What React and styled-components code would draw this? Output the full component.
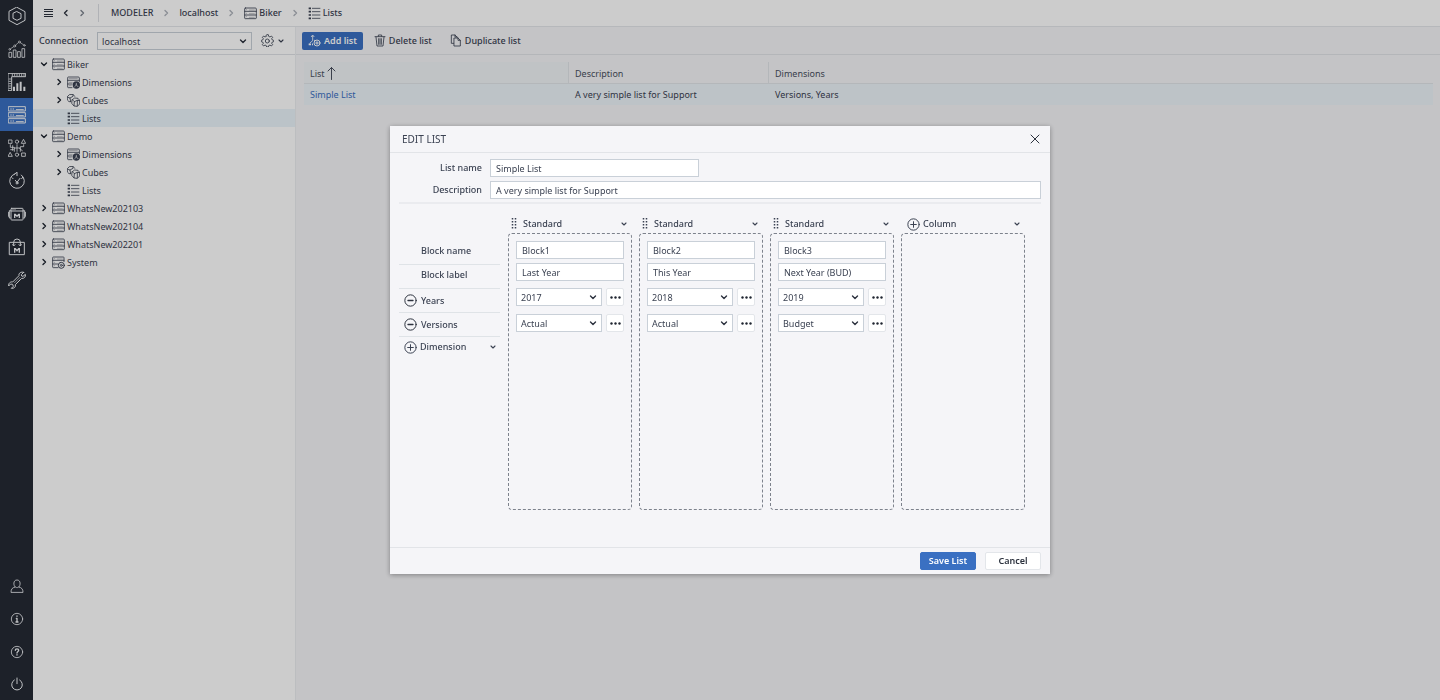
import React, { useState } from 'react';
import styled, { createGlobalStyle, css } from 'styled-components';

const GlobalStyle = createGlobalStyle`
  * {
    box-sizing: border-box;
  }
  body {
    margin: 0;
    background: #f5f5f8;
    color: #3b4252;
    font-family: 'Noto Sans', 'Open Sans', sans-serif;
    font-size: 9px;
    line-height: 12px;
  }
  button, input, select {
    font: inherit;
    color: inherit;
    margin: 0;
  }
  button {
    padding: 0;
    border: 0;
    background: none;
    cursor: pointer;
  }
  a {
    color: inherit;
    text-decoration: none;
  }
  svg {
    display: block;
    flex: none;
  }
`;

/* ---------- icons ---------- */

const Svg = styled.svg`
  fill: none;
  stroke: currentColor;
  stroke-width: ${(p) => p.$stroke || 3};
  stroke-linecap: round;
  stroke-linejoin: round;
`;

const RailSvg = ({ children }) => (
  <Svg width="18" height="18" viewBox="0 0 54 54" aria-hidden="true">{children}</Svg>
);

const LogoIcon = () => (
  <RailSvg>
    <path d="M27 1 51 14V40L27 53 3 40V14Z" />
    <path d="M27 14 39 20V34L27 40 15 34V20Z" />
  </RailSvg>
);

const ChartIcon = () => (
  <RailSvg>
    <path d="M4 37h7v15H4ZM17 30h7v22h-7ZM30 35h7v17h-7ZM43 26h7v26h-7Z" strokeWidth="2.5" />
    <circle cx="5" cy="28" r="2.5" strokeWidth="2" />
    <circle cx="20" cy="18" r="3" strokeWidth="2" />
    <circle cx="34" cy="6" r="3" strokeWidth="2" />
    <circle cx="49" cy="16" r="2.5" strokeWidth="2" />
    <path d="m8 26 9-6M22 16l9-8M37 8l9 6" strokeWidth="2" />
  </RailSvg>
);

const ReportIcon = () => (
  <RailSvg>
    <path d="M1 1h52v10H11v42H1Z" />
    <path d="M13 3v5M20 3v5M27 3v5M34 3v5M41 3v5M48 3v5M3 18h5M3 25h5M3 32h5M3 39h5M3 46h5" strokeWidth="2.5" />
    <path d="M18 41v13M28 31v23M38 26v28M49 41v13" strokeWidth="6" strokeLinecap="butt" />
  </RailSvg>
);

const ServerIcon = () => (
  <RailSvg>
    <path d="M2 2h50v13H2ZM2 20h50v13H2ZM2 38h50v13H2Z" />
    <path d="M8 9h2M15 9h2M8 27h2M15 27h2M8 45h2M15 45h2M25 11h21M25 29h21M25 47h21" />
  </RailSvg>
);

const FlowIcon = () => (
  <RailSvg>
    <path d="M2 3h10v10H2ZM42 42h10v10H42ZM47 2l6 11H41ZM7 41l6 11H1Z" strokeWidth="2.5" />
    <circle cx="27" cy="8" r="5" strokeWidth="2.5" />
    <circle cx="27" cy="47" r="5" strokeWidth="2.5" />
    <path d="M7 17v8h12v12M14 20v14M27 17v20M19 27h16M47 17v6H37v14M35 29l8 6M8 32h8" strokeWidth="2.5" />
  </RailSvg>
);

const GaugeIcon = () => (
  <RailSvg>
    <path d="M20 6a22 22 0 1 0 20 3M27 2v9M20 6l7-5M22 25l5 6 9-12M12 17l3 3M44 16l-3 4" />
    <circle cx="27" cy="33" r="3" />
  </RailSvg>
);

const MarketIcon = () => (
  <RailSvg>
    <rect x="9" y="10" width="36" height="35" rx="2" />
    <path d="M9 18h36M7 17H4v22h3M47 17h3v22h-3M1 22v12M53 22v12" />
    <path d="M14 14h2M20 14h2" strokeWidth="2" />
    <path d="M20 39V28h2l5 6 5-6h2v11" strokeWidth="4" strokeLinecap="butt" strokeLinejoin="miter" />
  </RailSvg>
);

const BagIcon = () => (
  <RailSvg>
    <path d="M5 13h44v37H5ZM17 22v-9a10 10 0 0 1 20 0v9M14 20l3 4 4-4M33 20l4 4 3-4" />
    <path d="M20 44V32h2l5 6 5-6h2v12" strokeWidth="4" strokeLinecap="butt" strokeLinejoin="miter" />
  </RailSvg>
);

const WrenchIcon = () => (
  <RailSvg>
    <path d="M47 4 40 11l1 4 4 1 7-6c2 7-4 14-11 12L22 41c2 7-4 12-12 11l6-6-2-6-6-1-6 6c-1-8 5-14 12-12L33 14C31 7 39 1 47 4Z" />
    <path d="m20 35 16-16" strokeWidth="2" />
  </RailSvg>
);

const UserIcon = () => (
  <RailSvg>
    <path d="M9 45c0-9 4-13 13-15-6-4-7-21 5-21s11 17 5 21c9 2 13 6 13 15Z" strokeWidth="2.5" />
    <path d="M22 30c3 3 7 3 10 0" strokeWidth="2" />
  </RailSvg>
);

const InfoIcon = () => (
  <RailSvg>
    <circle cx="27" cy="27" r="17" strokeWidth="2.5" />
    <path d="M27 18v1M25 25h2v11M24 36h6" strokeWidth="4" />
  </RailSvg>
);

const HelpIcon = () => (
  <RailSvg>
    <circle cx="27" cy="27" r="17" strokeWidth="2.5" />
    <path d="M22 22c0-6 10-6 10 0 0 4-5 3-5 8M27 35v1" strokeWidth="4" />
  </RailSvg>
);

const PowerIcon = () => (
  <RailSvg>
    <path d="M19 15a16 16 0 1 0 16 0M27 9v17" />
  </RailSvg>
);

const DatabaseIcon = ({ gear }) => (
  <Svg width="13" height="13" viewBox="0 0 39 39" $stroke={2.5} aria-hidden="true">
    <path d={gear ? 'M18 35H4q-2 0-2-2V5q0-2 2-2h30q2 0 2 2v12M2 13h34M2 24h15' : 'M4 3h30q3 0 3 3v27q0 2-3 2H4q-2 0-2-2V6q0-3 2-3ZM2 13h35M2 24h35'} />
    <path d={gear ? 'M7 8h1M7 19h1M7 29h1M16 9h15' : 'M7 8h1M7 19h1M7 29h1M16 9h15M16 20h15M16 31h15'} strokeWidth="2" opacity="0.5" />
    {gear && (
      <>
        <circle cx="28" cy="28" r="9" strokeWidth="3" />
        <circle cx="28" cy="28" r="3" />
      </>
    )}
  </Svg>
);

const DimensionIcon = () => (
  <Svg width="13" height="13" viewBox="0 0 39 39" aria-hidden="true">
    <path d="M15 35H4q-2 0-2-2V5q0-2 2-2h30q3 0 3 3v11M2 13h35M2 24h13" strokeWidth="2.5" />
    <path d="M7 8h24M7 19h9M7 29h6" strokeWidth="2" opacity="0.6" />
    <circle cx="28" cy="27" r="11" fill="currentColor" stroke="none" />
    <path d="M28 22v5l-5 5M28 27l5 5" stroke="#fff" strokeWidth="2" />
  </Svg>
);

const CubesIcon = () => (
  <Svg width="13" height="13" viewBox="0 0 39 39" aria-hidden="true">
    <path d="M11 23 6 23 1 18V8l6-6 11-1 5 6M1 9l8 3 2 11M9 12l9-5V2" strokeWidth="2.5" />
    <path d="m16 17 7-5 10 1 5 6v11l-7 7-10-1-6-7ZM21 35l1-12-6-6M22 23l9-4 7 1M31 19v17" strokeWidth="2.5" />
  </Svg>
);

const ListIcon = () => (
  <Svg width="13" height="13" viewBox="0 0 39 39" aria-hidden="true">
    <path d="M2 4h7M2 14h7M2 24h7M2 34h7" strokeWidth="5" strokeLinecap="butt" />
    <path d="M12 4h25M12 14h25M12 24h25M12 34h25" strokeWidth="3" strokeLinecap="butt" opacity="0.8" />
  </Svg>
);

const chevronPaths = {
  down: 'M1.5 3 4 5.5 6.5 3',
  right: 'M3 1.5 5.5 4 3 6.5',
  left: 'M5 1.5 2.5 4 5 6.5',
};

const Chevron = ({ dir = 'down', stroke = 1.4 }) => (
  <Svg width="8" height="8" viewBox="0 0 8 8" $stroke={stroke} aria-hidden="true">
    <path d={chevronPaths[dir]} />
  </Svg>
);

const SmallChevron = () => (
  <Svg width="6" height="6" viewBox="0 0 6 6" $stroke={1.1} aria-hidden="true">
    <path d="M1 2 3 4 5 2" />
  </Svg>
);

const MenuIcon = () => (
  <Svg width="10" height="10" viewBox="0 0 10 10" $stroke={1} aria-hidden="true">
    <path d="M0 1.5h9M0 3.5h9M0 6.5h9M0 8.5h9" strokeLinecap="butt" />
  </Svg>
);

const GearIcon = () => (
  <Svg width="13" height="13" viewBox="0 0 39 39" $stroke={2.5} aria-hidden="true">
    <path d="m16 3 1-1h5l1 5 4 2 4-3 4 4-3 4 2 4 4 1v4l-4 1-2 4 3 4-4 4-4-3-4 2-1 4h-5l-1-4-4-2-4 3-4-4 3-4-2-4-4-1v-4l4-1 2-4-3-4 4-4 4 3 4-2Z" />
    <circle cx="19" cy="21" r="6" />
  </Svg>
);

const AddListIcon = () => (
  <Svg width="13" height="13" viewBox="0 0 39 39" $stroke={2.5} aria-hidden="true">
    <path d="M14 6v12M10 8l4-5 4 5M14 20 6 27M19 19l4 1" />
    <path d="M2 31h7M12 31h3" strokeWidth="5" strokeLinecap="butt" />
    <circle cx="27" cy="27" r="9" strokeWidth="3" />
    <path d="M27 23v8M23 27h8" strokeWidth="3" />
  </Svg>
);

const TrashIcon = () => (
  <Svg width="12" height="13" viewBox="0 0 36 39" $stroke={2.5} aria-hidden="true">
    <path d="M3 8h30M13 7V3h10v4M6 9l3 27h18l3-27M14 14v17M18 14v17M22 14v17" />
  </Svg>
);

const CopyIcon = () => (
  <Svg width="12" height="13" viewBox="0 0 36 39" $stroke={2.5} aria-hidden="true">
    <path d="M11 28H4V3h11l7 7M15 3v6h6" />
    <path d="M13 12h11l7 7v17H13ZM24 12v7h7" />
  </Svg>
);

const SortIcon = () => (
  <Svg width="9" height="13" viewBox="0 0 9 13" $stroke={1} aria-hidden="true">
    <path d="M4.5 12.5v-12M1 4 4.5.5 8 4" />
  </Svg>
);

const CloseIcon = () => (
  <Svg width="10" height="10" viewBox="0 0 10 10" $stroke={1} aria-hidden="true">
    <path d="m1 1 8 8M9 1 1 9" />
  </Svg>
);

const CircleIcon = ({ plus }) => (
  <Svg width="13" height="13" viewBox="0 0 39 39" aria-hidden="true">
    <circle cx="19.5" cy="19.5" r="17" strokeWidth="3" />
    {plus ? <path d="M19.5 11v17M11 19.5h17" /> : <path d="M12 19.5h15" strokeWidth="4" />}
  </Svg>
);

const GripIcon = () => (
  <Svg width="6" height="12" viewBox="0 0 6 12" aria-hidden="true">
    <path d="M1.5 0v12M4.5 0v12" strokeLinecap="butt" strokeDasharray="1.5 1.5" strokeWidth="1.5" />
  </Svg>
);

const DotsIcon = () => (
  <Svg width="11" height="3" viewBox="0 0 11 3" aria-hidden="true">
    <g fill="currentColor" stroke="none">
      <circle cx="1.5" cy="1.5" r="1.2" />
      <circle cx="5.5" cy="1.5" r="1.2" />
      <circle cx="9.5" cy="1.5" r="1.2" />
    </g>
  </Svg>
);

/* ---------- shell ---------- */

const Page = styled.div`
  display: flex;
  min-height: 100vh;
`;

const Rail = styled.nav`
  display: flex;
  flex-direction: column;
  flex: none;
  width: 33px;
  background: #252a34;
`;

const RailItem = styled.a`
  display: flex;
  align-items: center;
  justify-content: center;
  height: 33px;
  color: #f0f2f5;
  &:first-child, &:last-child {
    height: 32px;
  }
  ${(p) => p.$active && css`
    background: #3a70c2;
  `}
`;

const RailSpacer = styled.div`
  flex: 1;
`;

const Content = styled.div`
  display: flex;
  flex-direction: column;
  flex: 1;
  min-width: 0;
`;

const TopBar = styled.header`
  display: flex;
  align-items: center;
  height: 27px;
  padding-left: 11px;
  background: #fff;
  border-bottom: 1px solid #e4e6ea;
  font-weight: 500;
`;

const HistoryButtons = styled.div`
  display: flex;
  align-items: center;
  gap: 8px;
  height: 18px;
  padding-right: 12px;
  border-right: 1px solid #dcdfe4;
`;

const IconButton = styled.button`
  display: flex;
  align-items: center;
  color: ${(p) => (p.$dim ? '#7d838e' : '#2c323e')};
`;

const Breadcrumb = styled.ol`
  display: flex;
  align-items: center;
  list-style: none;
  margin: 0;
  padding: 0 0 0 12px;
`;

const Crumb = styled.li`
  display: flex;
  align-items: center;
  a {
    display: flex;
    align-items: center;
    gap: 2px;
  }
`;

const CrumbArrow = styled.span`
  margin: 0 9px;
  color: #aeb3bb;
`;

const Columns = styled.div`
  display: flex;
  flex: 1;
`;

const Side = styled.aside`
  flex: none;
  width: 263px;
  background: #fff;
  border-right: 1px solid #eceef1;
`;

const ConnectionBar = styled.div`
  display: flex;
  align-items: center;
  height: 28px;
  padding: 0 11px 0 6px;
  gap: 9px;
  border-bottom: 1px solid #dfe2e6;
  label {
    font-weight: 500;
  }
`;

const GearButton = styled.button`
  display: flex;
  align-items: center;
  gap: 4px;
`;

const SelectBox = styled.span`
  display: grid;
  flex: 1;
  min-width: 0;
  align-items: center;
  background: #fff;
  > select, > svg {
    grid-area: 1 / 1;
  }
  > svg {
    justify-self: end;
    margin-right: 5px;
    color: #2c323e;
    pointer-events: none;
  }
`;

const fieldStyle = css`
  width: 100%;
  height: 18px;
  padding: 1px 4px 0 5px;
  border: 1px solid #c9d0d8;
  border-radius: 0;
  background: #fff;
  line-height: 15px;
  outline: none;
  &:focus {
    border-color: #3a70c2;
  }
`;

const SelectField = styled.select`
  ${fieldStyle}
  padding-left: 4px;
  appearance: none;
`;

const Input = styled.input`
  ${fieldStyle}
`;

const Tree = styled.ul`
  list-style: none;
  margin: 0;
  padding: 0;
`;

const TreeRow = styled.a`
  display: flex;
  align-items: center;
  height: 18px;
  padding-left: ${(p) => 7 + p.$level * 15}px;
  background: ${(p) => (p.$selected ? '#eaf4fa' : 'transparent')};
  > span {
    margin-left: 2px;
    padding-top: 1px;
  }
`;

const Twisty = styled.i`
  width: 8px;
  height: 8px;
  margin-right: 4px;
  color: #1f2530;
`;

/* ---------- list view ---------- */

const Main = styled.main`
  flex: 1;
  min-width: 0;
  background: #f5f5f8;
`;

const Toolbar = styled.div`
  display: flex;
  align-items: center;
  gap: 11px;
  height: 28px;
  padding: 0 6px;
  border-bottom: 1px solid #e2e4e8;
`;

const ToolButton = styled.button`
  display: flex;
  align-items: center;
  gap: 3px;
  height: 18px;
  padding-right: 7px;
  font-weight: 500;
  ${(p) => p.$primary && css`
    padding: 0 6px;
    border-radius: 2px;
    background: #3a70c2;
    color: #fff;
    font-weight: 600;
  `}
`;

const TableWrap = styled.div`
  padding: 7px 7px 0 8px;
`;

const Table = styled.table`
  width: 100%;
  table-layout: fixed;
  border-collapse: separate;
  border-spacing: 0;
  text-align: left;
  th, td {
    height: 21px;
    padding: 0 0 0 6px;
  }
  th {
    height: 22px;
    padding-top: 2px;
    border-bottom: 1px solid #e2e5e9;
    font-weight: 400;
    color: #4a5160;
  }
  th + th {
    border-left: 1px solid #e2e5e9;
  }
  th:first-child {
    background: #f0f4f7;
  }
  td {
    background: #edf4f9;
  }
  td:first-child {
    color: #3a70c2;
  }
  td + td {
    padding-left: 7px;
  }
`;

const SortHead = styled.span`
  display: flex;
  align-items: center;
  gap: 2px;
`;

/* ---------- dialog ---------- */

const Overlay = styled.div`
  position: fixed;
  inset: 0;
  display: flex;
  align-items: center;
  justify-content: center;
  background: rgba(0, 0, 0, 0.2);
`;

const Dialog = styled.form`
  display: flex;
  flex-direction: column;
  width: 660px;
  max-width: 100%;
  background: #f5f5f8;
  box-shadow: 0 1px 5px rgba(0, 0, 0, 0.35);
`;

const DialogHeader = styled.div`
  display: flex;
  align-items: center;
  justify-content: space-between;
  height: 27px;
  padding: 0 10px 0 12px;
  border-bottom: 1px solid #e2e4e8;
  h2 {
    margin: 0;
    font-size: 10px;
    font-weight: 400;
  }
`;

const DialogBody = styled.div`
  padding: 6px 9px 37px;
`;

const Fields = styled.div`
  display: grid;
  grid-template-columns: 83px 1fr;
  column-gap: 8px;
  row-gap: 4px;
  align-items: center;
  padding-bottom: 3px;
  border-bottom: 2px solid #eaebef;
  label {
    font-weight: 500;
    text-align: right;
  }
`;

const NameInput = styled(Input)`
  max-width: 209px;
`;

const Blocks = styled.div`
  display: flex;
  gap: 7px;
  padding-top: 11px;
`;

const RowLabels = styled.div`
  width: 102px;
  padding-top: 26px;
  font-weight: 500;
`;

const RowLabel = styled.div`
  display: flex;
  align-items: center;
  gap: 4px;
  height: ${(p) => (p.$last ? 20 : 24)}px;
  margin-right: 1px;
  padding: ${(p) => (p.$plain ? '0 4px 3px 22px' : '0 4px 0 5px')};
  border-bottom: ${(p) => (p.$last ? 0 : 1)}px solid #dfe3e7;
`;

const AddButton = styled.button`
  display: flex;
  flex: 1;
  align-items: center;
  gap: 3px;
  font-weight: 500;
  > svg:last-child {
    margin-left: auto;
  }
`;

const Block = styled.section`
  display: flex;
  flex-direction: column;
  width: 124px;
`;

const BlockHead = styled.div`
  display: flex;
  align-items: center;
  gap: 6px;
  height: 18px;
  padding: 0 5px 0 ${(p) => (p.$add ? 6 : 3)}px;
`;

const BlockBody = styled.div`
  display: flex;
  flex-direction: column;
  gap: 4px;
  height: 277px;
  padding: 7px;
  border: 1px dashed #7d828c;
  border-radius: 4px;
`;

const PickRow = styled.div`
  display: flex;
  gap: 4px;
  & + & {
    margin-top: 4px;
  }
  input + & {
    margin-top: 3px;
  }
`;

const MoreButton = styled.button`
  display: flex;
  align-items: center;
  justify-content: center;
  width: 18px;
  height: 18px;
  border: 1px solid #e3e6ea;
  border-radius: 2px;
  background: #fff;
  color: #1f2530;
`;

const DialogFooter = styled.div`
  display: flex;
  justify-content: flex-end;
  gap: 9px;
  padding: 4px 9px;
  border-top: 1px solid #e2e4e8;
`;

const DialogButton = styled.button`
  width: 56px;
  height: 18px;
  border: 1px solid ${(p) => (p.$primary ? '#3a70c2' : '#e3e6ea')};
  border-radius: 2px;
  background: ${(p) => (p.$primary ? '#3a70c2' : '#fff')};
  color: ${(p) => (p.$primary ? '#fff' : '#2c323e')};
  font-weight: 600;
`;

const railTop = [
  { label: 'Home', Icon: LogoIcon },
  { label: 'Dashboards', Icon: ChartIcon },
  { label: 'Reports', Icon: ReportIcon },
  { label: 'Modeler', Icon: ServerIcon, active: true },
  { label: 'Integrator', Icon: FlowIcon },
  { label: 'Scheduler', Icon: GaugeIcon },
  { label: 'My models', Icon: MarketIcon },
  { label: 'Marketplace', Icon: BagIcon },
  { label: 'Administration', Icon: WrenchIcon },
];

const railBottom = [
  { label: 'User', Icon: UserIcon },
  { label: 'Info', Icon: InfoIcon },
  { label: 'Help', Icon: HelpIcon },
  { label: 'Log out', Icon: PowerIcon },
];

const folders = [
  { name: 'Dimensions', level: 1, Icon: DimensionIcon, arrow: 'right' },
  { name: 'Cubes', level: 1, Icon: CubesIcon, arrow: 'right' },
  { name: 'Lists', level: 1, Icon: ListIcon },
];

const tree = [
  { name: 'Biker', level: 0, Icon: DatabaseIcon, arrow: 'down' },
  ...folders.map((f) => ({ ...f, selected: f.name === 'Lists' })),
  { name: 'Demo', level: 0, Icon: DatabaseIcon, arrow: 'down' },
  ...folders,
  { name: 'WhatsNew202103', level: 0, Icon: DatabaseIcon, arrow: 'right' },
  { name: 'WhatsNew202104', level: 0, Icon: DatabaseIcon, arrow: 'right' },
  { name: 'WhatsNew202201', level: 0, Icon: DatabaseIcon, arrow: 'right' },
  { name: 'System', level: 0, Icon: DatabaseIcon, arrow: 'right', gear: true },
];

const initialBlocks = [
  { name: 'Block1', label: 'Last Year', year: '2017', version: 'Actual' },
  { name: 'Block2', label: 'This Year', year: '2018', version: 'Actual' },
  { name: 'Block3', label: 'Next Year (BUD)', year: '2019', version: 'Budget' },
];

const Select = ({ options, ...rest }) => (
  <SelectBox>
    <SelectField {...rest}>
      {options.map((o) => <option key={o}>{o}</option>)}
    </SelectField>
    <Chevron />
  </SelectBox>
);

const RailLinks = ({ items }) => items.map(({ label, Icon, active }) => (
  <RailItem key={label} href="#" aria-label={label} $active={active}>
    <Icon />
  </RailItem>
));

const SidePanel = () => (
  <Side>
    <ConnectionBar>
      <label htmlFor="connection">Connection</label>
      <Select id="connection" options={['localhost']} />
      <GearButton type="button" aria-label="Connection settings">
        <GearIcon />
        <SmallChevron />
      </GearButton>
    </ConnectionBar>
    <Tree>
      {tree.map(({ name, level, Icon, arrow, selected, gear }, i) => (
        <li key={i}>
          <TreeRow href="#" $level={level} $selected={selected}>
            <Twisty>{arrow && <Chevron dir={arrow} />}</Twisty>
            {gear ? <Icon gear /> : <Icon />}
            <span>{name}</span>
          </TreeRow>
        </li>
      ))}
    </Tree>
  </Side>
);

const BlockColumn = ({ block, onChange }) => {
  const set = (key) => (e) => onChange({ ...block, [key]: e.target.value });
  return (
    <Block>
      <BlockHead>
        <GripIcon />
        <AddButton type="button">
          Standard
          <SmallChevron />
        </AddButton>
      </BlockHead>
      <BlockBody>
        <Input aria-label="Block name" value={block.name} onChange={set('name')} />
        <Input aria-label="Block label" value={block.label} onChange={set('label')} />
        <PickRow>
          <Select aria-label="Years" options={['2017', '2018', '2019']} value={block.year} onChange={set('year')} />
          <MoreButton type="button" aria-label="More years"><DotsIcon /></MoreButton>
        </PickRow>
        <PickRow>
          <Select aria-label="Versions" options={['Actual', 'Budget']} value={block.version} onChange={set('version')} />
          <MoreButton type="button" aria-label="More versions"><DotsIcon /></MoreButton>
        </PickRow>
      </BlockBody>
    </Block>
  );
};

const EditListDialog = () => {
  const [blocks, setBlocks] = useState(initialBlocks);
  const updateBlock = (index, next) => {
    setBlocks(blocks.map((b, i) => (i === index ? next : b)));
  };
  return (
    <Overlay>
      <Dialog role="dialog" aria-labelledby="dialog-title" onSubmit={(e) => e.preventDefault()}>
        <DialogHeader>
          <h2 id="dialog-title">EDIT LIST</h2>
          <IconButton type="button" aria-label="Close"><CloseIcon /></IconButton>
        </DialogHeader>
        <DialogBody>
          <Fields>
            <label htmlFor="list-name">List name</label>
            <NameInput id="list-name" defaultValue="Simple List" />
            <label htmlFor="list-description">Description</label>
            <Input id="list-description" defaultValue="A very simple list for Support" />
          </Fields>
          <Blocks>
            <RowLabels>
              <RowLabel $plain>Block name</RowLabel>
              <RowLabel $plain>Block label</RowLabel>
              {['Years', 'Versions'].map((name) => (
                <RowLabel key={name}>
                  <IconButton type="button" aria-label={`Remove ${name}`}><CircleIcon /></IconButton>
                  {name}
                </RowLabel>
              ))}
              <RowLabel $last>
                <AddButton type="button">
                  <CircleIcon plus />
                  Dimension
                  <SmallChevron />
                </AddButton>
              </RowLabel>
            </RowLabels>
            {blocks.map((block, i) => (
              <BlockColumn key={i} block={block} onChange={(next) => updateBlock(i, next)} />
            ))}
            <Block>
              <BlockHead $add>
                <AddButton type="button">
                  <CircleIcon plus />
                  Column
                  <SmallChevron />
                </AddButton>
              </BlockHead>
              <BlockBody />
            </Block>
          </Blocks>
        </DialogBody>
        <DialogFooter>
          <DialogButton type="submit" $primary>Save List</DialogButton>
          <DialogButton type="button">Cancel</DialogButton>
        </DialogFooter>
      </Dialog>
    </Overlay>
  );
};

const App = () => (
  <>
    <GlobalStyle />
    <Page>
      <Rail>
        <RailLinks items={railTop} />
        <RailSpacer />
        <RailLinks items={railBottom} />
      </Rail>
      <Content>
        <TopBar>
          <HistoryButtons>
            <IconButton type="button" aria-label="Menu"><MenuIcon /></IconButton>
            <IconButton type="button" aria-label="Back"><Chevron dir="left" /></IconButton>
            <IconButton type="button" aria-label="Forward" $dim><Chevron dir="right" /></IconButton>
          </HistoryButtons>
          <Breadcrumb>
            <Crumb><a href="#">MODELER</a><CrumbArrow><Chevron dir="right" /></CrumbArrow></Crumb>
            <Crumb><a href="#">localhost</a><CrumbArrow><Chevron dir="right" /></CrumbArrow></Crumb>
            <Crumb><a href="#"><DatabaseIcon />Biker</a><CrumbArrow><Chevron dir="right" /></CrumbArrow></Crumb>
            <Crumb><a href="#"><ListIcon />Lists</a></Crumb>
          </Breadcrumb>
        </TopBar>
        <Columns>
          <SidePanel />
          <Main>
            <Toolbar>
              <ToolButton type="button" $primary><AddListIcon />Add list</ToolButton>
              <ToolButton type="button"><TrashIcon />Delete list</ToolButton>
              <ToolButton type="button"><CopyIcon />Duplicate list</ToolButton>
            </Toolbar>
            <TableWrap>
              <Table>
                <colgroup>
                  <col width="264" />
                  <col width="200" />
                  <col />
                </colgroup>
                <thead>
                  <tr>
                    <th><SortHead>List<SortIcon /></SortHead></th>
                    <th>Description</th>
                    <th>Dimensions</th>
                  </tr>
                </thead>
                <tbody>
                  <tr>
                    <td><a href="#">Simple List</a></td>
                    <td>A very simple list for Support</td>
                    <td>Versions, Years</td>
                  </tr>
                </tbody>
              </Table>
            </TableWrap>
          </Main>
        </Columns>
      </Content>
    </Page>
    <EditListDialog />
  </>
);

export default App;
